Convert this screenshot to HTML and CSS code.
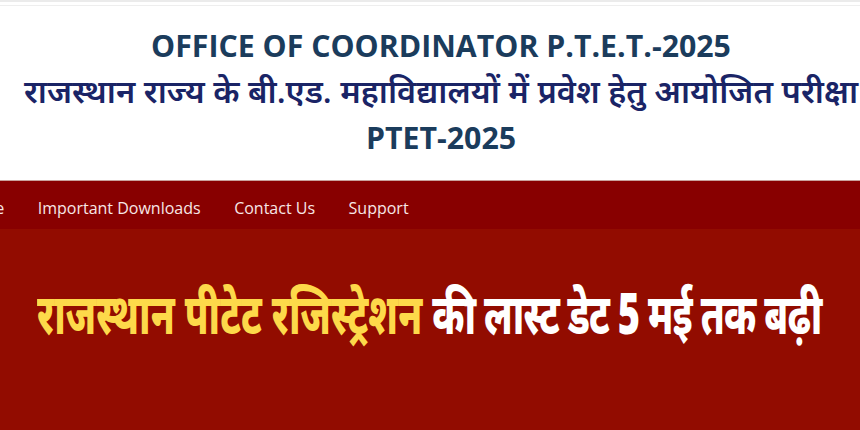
FILE: index.html
```html
<!DOCTYPE html>
<html lang="hi">
<head>
<meta charset="utf-8">
<link rel="stylesheet" href="styles.css">
</head>
<body>
<div class="page">
  <div class="topbar"></div>
  <header class="header">
    <h1 class="title-en">OFFICE OF COORDINATOR P.T.E.T.-2025</h1>
    <h2 class="title-hi">राजस्थान राज्य के बी.एड. महाविद्यालयों में प्रवेश हेतु आयोजित परीक्षा</h2>
    <h1 class="title-en title-code">PTET-2025</h1>
  </header>
  <nav class="nav">
    <a class="nav-item nav-home">Home</a>
    <a class="nav-item">Important Downloads</a>
    <a class="nav-item">Contact Us</a>
    <a class="nav-item">Support</a>
  </nav>
  <main class="banner">
    <p class="headline"><span class="hl-yellow">राजस्थान पीटेट रजिस्ट्रेशन</span> <span class="hl-white">की लास्ट डेट 5 मई तक बढ़ी</span></p>
  </main>
</div>
</body>
</html>
```
FILE: styles.css
```css
* { box-sizing: border-box; }
html, body { margin: 0; padding: 0; }
body {
  width: 860px;
  height: 430px;
  overflow: hidden;
  background: #920c00;
  font-family: "Open Sans", "Noto Sans", sans-serif;
}
.page { width: 860px; height: 430px; display: flex; flex-direction: column; overflow: hidden; }
.topbar {
  height: 6px;
  background: #fff;
  border-top: 2px solid #ebebeb;
  border-bottom: 1px solid #eeeeee;
}
.header {
  background: #fff;
  height: 175px;
  display: flex;
  flex-direction: column;
  align-items: center;
  padding-top: 20px;
  padding-left: 22px;
  border-bottom: 1px solid #c9a29c;
}
.title-en {
  margin: 0;
  font-size: 30.3px;
  line-height: 40px;
  font-weight: 700;
  color: #1b3c5c;
  white-space: nowrap;
}
.title-hi {
  margin: 0;
  font-size: 32.6px;
  line-height: 49px;
  font-weight: 600;
  color: #1a2466;
  white-space: nowrap;
}
.title-code { line-height: 45px; }
.nav {
  height: 48px;
  background: #880000;
  display: flex;
  align-items: center;
  gap: 33.5px;
  padding-top: 6px;
  overflow: hidden;
}
.nav-item {
  color: #f7e6e6;
  font-size: 16px;
  white-space: nowrap;
}
.nav-home { margin-left: -41px; }
.banner {
  flex: 1;
  background: #920c00;
  padding-top: 51px;
  padding-left: 37px;
}
.headline {
  display: inline-block;
  margin: 0;
  font-size: 56px;
  line-height: 64px;
  font-weight: 800;
  white-space: nowrap;
  transform: scaleX(0.68);
  transform-origin: left center;
}
.hl-yellow { color: #fdd94a; }
.hl-white { color: #ffffff; letter-spacing: -1.4px; }
```
